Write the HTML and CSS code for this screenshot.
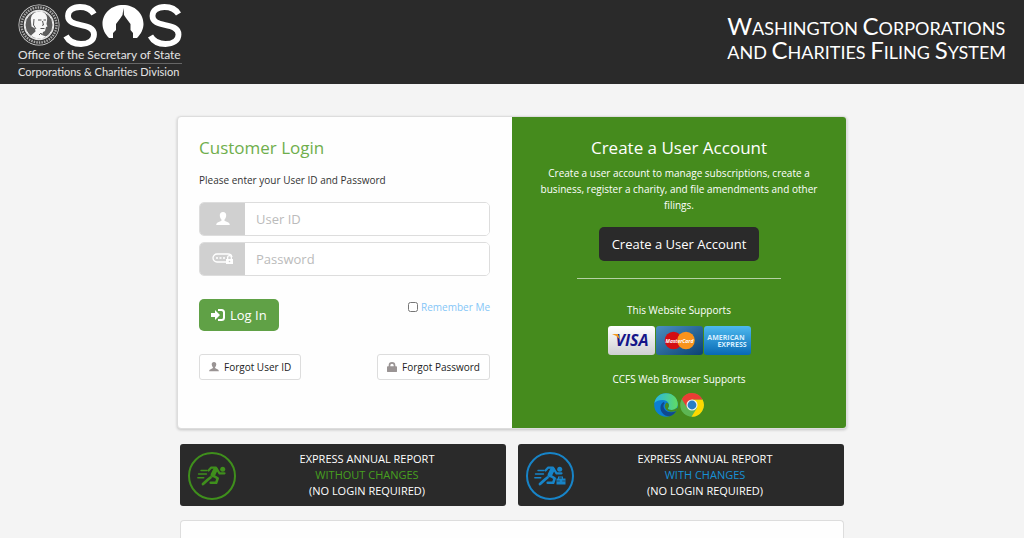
FILE: index.html
```html
<!DOCTYPE html>
<html lang="en">
<head>
<meta charset="utf-8">
<meta name="viewport" content="width=device-width, initial-scale=1">
<title>Washington Corporations and Charities Filing System</title>
<link rel="stylesheet" href="styles.css">
</head>
<body>
<svg class="defs" aria-hidden="true">
  <symbol id="user" viewBox="0 0 14 14"><path d="M7 0C4.900 0 3.700 1.500 3.800 3.500c.1 1.700.7 3 1.600 3.900.4.500.2 1.200-.4 1.500L1.600 10.500C.7 11 .3 11.700.2 13h13.600c-.1-1.300-.5-2-1.400-2.500L9 8.900c-.6-.3-.8-1-.4-1.500.9-.9 1.500-2.200 1.600-3.900C10.300 1.500 9.100 0 7 0z"/></symbol>
  <symbol id="lock" viewBox="0 0 12 12"><path d="M2 5V4a4 4 0 0 1 8 0v1h1q1 0 1 1v5q0 1-1 1H1q-1 0-1-1V6q0-1 1-1zM4 5h4V4a2 2 0 0 0-4 0z"/></symbol>
  <symbol id="runner" viewBox="0 0 30 20">
    <circle cx="25.700" cy="3.200" r="2.500" fill="currentColor"/>
    <g fill="none" stroke="currentColor" stroke-linecap="round" stroke-linejoin="round">
      <path d="M11.500 4.500L14.200 1.600H19l3.500 5.700h5" stroke-width="2.200"/>
      <path d="M18.500 3.500L15.800 9" stroke-width="4.600"/>
      <path d="M16 9.500l4.700 2.800-1.500 4.500h-5.500" stroke-width="2.600"/>
      <path d="M13.500 11.500l-2.500 2L6 18" stroke-width="2.800"/>
      <path d="M4 4.500h6M1.500 8h8M.8 11.700h6" stroke-width="1.400"/>
    </g>
  </symbol>
</svg>

<header class="site-header">
  <a class="logo" href="#" aria-label="Office of the Secretary of State home">
    <svg class="logo-art" viewBox="0 0 164 43" aria-hidden="true">
      <circle cx="21" cy="21" r="20.500" fill="#e4e4e4"/>
      <circle cx="21" cy="21" r="17.500" fill="none" stroke="#333" stroke-width="4.500"/>
      <circle cx="21" cy="21" r="17.500" fill="none" stroke="#aaa" stroke-width="2.400" stroke-dasharray="1.500 1.100"/>
      <circle cx="21" cy="21" r="14" fill="#5c5c5c" stroke="#eee" stroke-width="1"/>
      <path d="M13 18c-1-7 3-10.500 8.500-10.500 5.500 0 8.500 4 7.500 9.500l-.5 3 1 2.500-1.500.5-1 4-2 1-1 3 4 1.500c-4 3-11 2.500-15-1l4.500-4-.5-3-3.500-2z" fill="#f7f7f7"/>
      <path d="M20 16h3.500m2 0h2.500M24.500 17l1 4-1.500.3m-1.500 3.200h4M16 15l-.5 6 2.500 4M21 31l2-2 1 2" fill="none" stroke="#555" stroke-width="1"/>
      <path d="M76 10C73 5 68 3 62 3c-7 0-12 3.500-12 9 0 6 6 7.500 12.500 9 7 1.500 13.500 3 13.500 9.500 0 6-5.500 9.500-13 9.500-7 0-12-2.500-15-8M160.500 10c-3-5-8-7-14-7-7 0-12 3.500-12 9 0 6 6 7.500 12.500 9 7 1.500 13.500 3 13.500 9.500 0 6-5.500 9.500-13 9.500-7 0-12-2.500-15-8" fill="none" stroke="#fff" stroke-width="5.800"/>
      <path d="M91 34C87 30 84.500 25 84.500 20 84.500 9 93.500 1 105 1s20.500 8 20.500 19c0 5-2.500 10-6.500 14h-4v-5l-2.500-3v-6l-4.500-6-2-3-.5-7-1 7-2 3-4.500 6v6L95 29v5z" fill="#fff"/>
    </svg>
    <span class="logo-office">Office of the Secretary of State</span>
    <span class="logo-division">Corporations &amp; Charities Division</span>
  </a>
  <h1 class="site-title"><span class="cap">W</span>ashington <span class="cap">C</span>orporations<br>and <span class="cap">C</span>harities <span class="cap">F</span>iling <span class="cap">S</span>ystem</h1>
</header>

<main class="page">
  <div class="card">
    <form class="login">
      <h2 class="title title-login">Customer Login</h2>
      <p class="hint">Please enter your User ID and Password</p>
      <div class="field">
        <label class="addon" for="userid"><svg class="icon-user" role="img" aria-label="User ID"><use href="#user"/></svg></label>
        <input class="text" id="userid" type="text" placeholder="User ID">
      </div>
      <div class="field">
        <label class="addon" for="password">
          <svg class="icon-pass" viewBox="0 0 22 12" role="img" aria-label="Password"><path d="M14 9H5a4 4 0 0 1 0-8h11q3.500 0 4 3" fill="none" stroke="#fff" stroke-width="1.300"/><path d="M4 5h2M7.500 5h2M11 5h2" stroke="#fff" stroke-width="1.500"/><path d="M15 6V4.500a2.500 2.500 0 0 1 5 0V6h1v5h-7V6zm1.300 0h2.400V4.500a1.200 1.200 0 0 0-2.400 0z" fill="#fff"/><circle cx="17.500" cy="8.500" r=".8" fill="#d0d0d0"/></svg>
        </label>
        <input class="text" id="password" type="password" placeholder="Password">
      </div>
      <div class="row row-login">
        <button class="btn btn-login" type="button"><svg class="icon-login" viewBox="0 0 14 12" aria-hidden="true"><path d="M0 4h4V1l5 5-5 5V8H0z" fill="#fff"/><path d="M7 1h3.500Q13 1 13 3.500v5Q13 11 10.500 11H7" fill="none" stroke="#fff" stroke-width="2"/></svg>Log In</button>
        <label class="remember"><input class="tick" type="checkbox">Remember Me</label>
      </div>
      <div class="row">
        <button class="btn btn-small" type="button"><svg class="icon-small" aria-hidden="true"><use href="#user"/></svg>Forgot User ID</button>
        <button class="btn btn-small" type="button"><svg class="icon-small" aria-hidden="true"><use href="#lock"/></svg>Forgot Password</button>
      </div>
    </form>

    <section class="signup">
      <h2 class="title">Create a User Account</h2>
      <p class="blurb">Create a user account to manage subscriptions, create a business, register a charity, and file amendments and other filings.</p>
      <button class="btn btn-create" type="button">Create a User Account</button>
      <hr class="rule">
      <p class="support">This Website Supports</p>
      <div class="cards">
        <svg class="pay" viewBox="0 0 47 29" role="img" aria-label="Visa">
          <defs><linearGradient id="gv" x2="0" y2="1"><stop stop-color="#fff"/><stop offset="1" stop-color="#cfcfd2"/></linearGradient></defs>
          <rect width="47" height="29" rx="3" fill="url(#gv)"/>
          <text class="visa" x="24" y="20" text-anchor="middle">VISA</text>
          <path d="M4 8h6l2 5.500Q9 9.500 4 8z" fill="#f39a1e"/>
        </svg>
        <svg class="pay" viewBox="0 0 47 29" role="img" aria-label="MasterCard">
          <defs><linearGradient id="gm" x2="1" y2="1"><stop stop-color="#4a8fc0"/><stop offset="1" stop-color="#0b4173"/></linearGradient></defs>
          <rect width="47" height="29" rx="3" fill="url(#gm)"/>
          <circle cx="17.500" cy="14.500" r="8.800" fill="#d40d12"/><circle cx="30" cy="14.500" r="8.800" fill="#f9931c"/>
          <text class="mc" x="23.500" y="17" text-anchor="middle">MasterCard</text>
        </svg>
        <svg class="pay" viewBox="0 0 47 29" role="img" aria-label="American Express">
          <defs><linearGradient id="ga" x2="0" y2="1"><stop stop-color="#4db9ef"/><stop offset="1" stop-color="#0869b4"/></linearGradient></defs>
          <rect width="47" height="29" rx="3" fill="url(#ga)"/>
          <text class="amex" x="22" y="14" text-anchor="middle">AMERICAN</text>
          <text class="amex" x="28" y="21" text-anchor="middle">EXPRESS</text>
        </svg>
      </div>
      <p class="support">CCFS Web Browser Supports</p>
      <div class="browsers">
        <svg class="browser" viewBox="0 0 24 24" role="img" aria-label="Microsoft Edge">
          <defs><linearGradient id="ge"><stop stop-color="#26b5e8"/><stop offset="1" stop-color="#61dc60"/></linearGradient></defs>
          <circle cx="12" cy="12" r="11.800" fill="#0b7fd4"/>
          <path d="M.4 10C1.500 4 6 .2 12 .2c7 0 11.800 5 11.800 10.800 0 4-3 6-6.300 6-2.500 0-4-1-3.500-2 1-1.200 1.300-2.500.8-4C14 8.500 11.500 7 8.500 7 5 7 2 8 .4 10z" fill="url(#ge)"/>
          <path d="M9.500 9C6 11 5.500 16 8 19.500c2 2.800 5 4 7.500 3.800 3-.8 5.500-2.700 6.700-5.300-4 2-8.500 1.500-11-1-2-2-2.500-5-.5-7z" fill="#10498f"/>
          <path d="M12.500 9.500q2 .5 2.300 2c.3 1.300 0 2.500-.8 3.500-.5 1 1 2 3.500 2 2 0 3.800-.7 5-2l1.500 1-1.600 2c-4 1.500-8 .8-10.200-1.500-1.800-2-1.700-5 .3-7z" fill="#458b1d"/>
        </svg>
        <svg class="browser" viewBox="0 0 24 24" role="img" aria-label="Google Chrome">
          <circle cx="12" cy="12" r="11.800" fill="#5db653"/>
          <path d="M12 6.500h10.500A11.800 11.800 0 0 1 11.500 23.800L17 15z" fill="#fdd800"/>
          <path d="M1.800 6A11.800 11.800 0 0 1 22.500 6.500H12L7 14.500z" fill="#e93e34"/>
          <circle cx="12" cy="12" r="5.500" fill="#f1f5f4"/><circle cx="12" cy="12" r="4.400" fill="#297ec5"/>
        </svg>
      </div>
    </section>
  </div>

  <div class="express">
    <a class="report report-green" href="#">
      <span class="badge"><svg class="runner" viewBox="0 0 32 20" aria-hidden="true"><use href="#runner" x="1" width="30" height="20"/></svg></span>
      <span class="report-text">EXPRESS ANNUAL REPORT<br><span class="accent">WITHOUT CHANGES</span><br>(NO LOGIN REQUIRED)</span>
    </a>
    <a class="report report-blue" href="#">
      <span class="badge"><svg class="runner" viewBox="0 0 32 20" aria-hidden="true"><use href="#runner" width="30" height="20"/><path d="M24 12.500V10.500h5v2h2.500V18.500h-9v-6zm1.200 0h2.600v-1h-2.600z" fill="currentColor"/><path d="M22.500 15h3.300m2.400 0h3.300" stroke="#2a2a2a" stroke-width=".6"/></svg></span>
      <span class="report-text">EXPRESS ANNUAL REPORT<br><span class="accent">WITH CHANGES</span><br>(NO LOGIN REQUIRED)</span>
    </a>
  </div>

  <section class="panel" aria-label="Information"></section>
</main>
</body>
</html>
```

FILE: styles.css
```css
* { box-sizing: border-box; }
body {
  margin: 0;
  background: #f4f4f4;
  color: #333;
  font: 10px/16px "Open Sans", "Noto Sans", sans-serif;
}
h1, h2, p { margin: 0; font-weight: 400; }
button, input { font-family: inherit; }
a { text-decoration: none; }
.defs { position: absolute; width: 0; height: 0; }

.site-header {
  display: flex;
  justify-content: space-between;
  align-items: flex-start;
  padding: 4px 18px 5px;
  background: #2a2a2a;
  color: #fff;
}
.logo {
  display: flex;
  flex-direction: column;
  width: 164px;
  color: #e4e4e4;
  font-family: Lato, sans-serif;
  font-size: 11px;
  white-space: nowrap;
}
.logo-art { width: 164px; height: 43px; }
.logo-office {
  padding-bottom: 1px;
  border-bottom: 1px solid #666;
  font-size: 12px;
  line-height: 15px;
}
.logo-division { padding-top: 1px; line-height: 14px; }
.site-title {
  padding-top: 12px;
  font: 400 18px/24px Lato, sans-serif;
  text-transform: uppercase;
}
.cap { font-size: 24px; line-height: 20px; }

.page { max-width: 670px; margin: 32px auto 0; }
.card {
  display: grid;
  grid-template-columns: 1fr 1fr;
  border: 1px solid #ddd;
  border-radius: 4px;
  background: #fefefe;
  box-shadow: 0 1px 3px #0003;
  overflow: hidden;
}
.login { padding: 19px 22px 48px 21px; }
.title { font-size: 17px; line-height: 24px; }
.title-login { color: #6fae4c; }
.hint { margin: 12px 0 14px; }

.field {
  display: flex;
  height: 34px;
  margin-bottom: 6px;
  border: 1px solid #ddd;
  border-radius: 5px;
  overflow: hidden;
}
.addon {
  display: flex;
  flex: 0 0 45px;
  align-items: center;
  justify-content: center;
  background: #d0d0d0;
}
.icon-user { width: 14px; height: 14px; fill: #fff; }
.icon-pass { width: 22px; height: 12px; }
.text {
  flex: 1;
  min-width: 0;
  padding: 0 11px;
  border: 0;
  background: #fff;
  font-size: 13px;
}
.text::placeholder { color: #bbb; }

.row { display: flex; justify-content: space-between; align-items: flex-start; }
.row-login { margin: 23px 0; }
.btn {
  display: flex;
  align-items: center;
  justify-content: center;
  border: 1px solid transparent;
  border-radius: 5px;
  color: #fff;
  font-size: 13px;
}
.btn-login { gap: 5px; height: 32px; padding: 0 11px; background: #60a146; }
.icon-login { width: 14px; height: 12px; }
.remember { display: flex; align-items: center; gap: 3px; color: #85c6f7; }
.tick { width: 10px; height: 10px; margin: 0; }
.btn-small {
  gap: 5px;
  height: 26px;
  padding: 0 9px;
  border-color: #ddd;
  border-radius: 3px;
  background: #fff;
  color: #222;
  font-size: 10px;
}
.icon-small { width: 10px; height: 10px; fill: #9a9494; }

.signup {
  display: flex;
  flex-direction: column;
  align-items: center;
  padding: 19px 24px 10px;
  background: #458b1d;
  color: #fff;
  text-align: center;
}
.blurb { padding-top: 5px; }
.btn-create { height: 34px; margin-top: 14px; padding: 0 12px; background: #2a2a2a; }
.rule {
  width: 204px;
  margin: 17px 0 23px;
  border: 0;
  border-top: 1px solid #b5d1a5;
}
.cards { display: flex; gap: 1px; margin: 8px 0 16px; }
.pay { width: 47px; height: 29px; }
.visa { font: italic 700 16px "Open Sans", sans-serif; fill: #151589; }
.mc { font: italic 700 5px "Open Sans", sans-serif; fill: #fff; }
.amex { font: 700 7px "Open Sans", sans-serif; fill: #d6efff; }
.browsers { display: flex; gap: 2px; margin-top: 6px; }
.browser { width: 24px; height: 24px; }

.express { display: grid; grid-template-columns: 1fr 1fr; gap: 12px; margin: 15px 3px 14px; }
.report {
  display: flex;
  align-items: center;
  padding: 6px 8px;
  border-radius: 3px;
  background: #2a2a2a;
  color: #fff;
  font-size: 11px;
}
.report-green { --accent: #47a01f; --badge: #3f8f1c; }
.report-blue { --accent: #1791d5; --badge: #1784c8; }
.badge {
  display: flex;
  flex: 0 0 48px;
  height: 48px;
  margin-top: 2px;
  align-items: center;
  justify-content: center;
  border: 2px solid var(--badge);
  border-radius: 50%;
  color: var(--badge);
}
.runner { width: 32px; height: 20px; }
.report-text { flex: 1; text-align: center; }
.accent { color: var(--accent); }

.panel {
  min-height: 18px;
  border: 1px solid #ddd;
  border-bottom: 0;
  border-radius: 4px 4px 0 0;
  margin: 0 3px;
  background: #fefefe;
}
```
